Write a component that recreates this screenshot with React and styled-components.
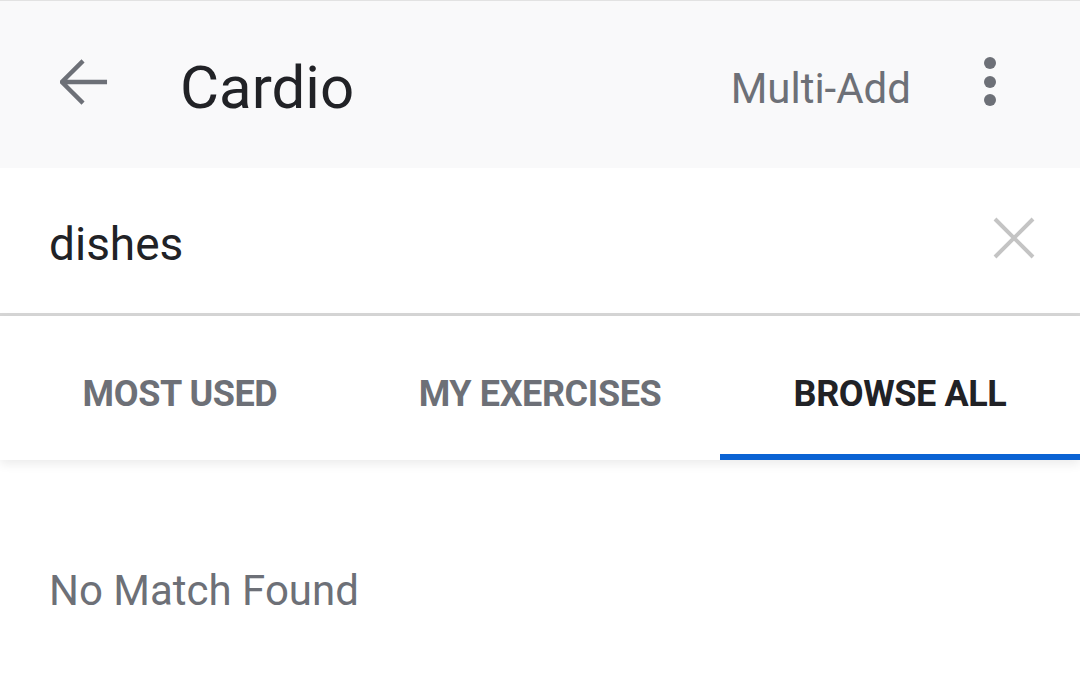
import React from "react";
import styled, { createGlobalStyle } from "styled-components";

const GlobalStyle = createGlobalStyle`
  html, body {
    margin: 0;
    padding: 0;
    background: #ffffff;
    font-family: Roboto, "Noto Sans", sans-serif;
  }
`;

const Page = styled.div`
  width: 1080px;
  height: 682px;
  overflow: hidden;
  background: #ffffff;
`;

const Header = styled.header`
  height: 168px;
  box-sizing: border-box;
  border-top: 1px solid #e2e2e2;
  background: #f9f9fa;
  display: flex;
  align-items: center;
  padding: 0 84px 0 60px;
`;

const BackButton = styled.div`
  width: 48px;
  height: 48px;
  display: flex;
  align-items: center;
  justify-content: center;
  margin-top: -6px;
`;

const Title = styled.h1`
  margin: 6px 0 0 72px;
  flex: 1;
  font-size: 60px;
  font-weight: 400;
  color: #212226;
  letter-spacing: 0;
`;

const Action = styled.span`
  font-size: 42px;
  color: #6d7077;
  margin-right: 73px;
  margin-top: 8px;
`;

const Dots = styled.div`
  display: flex;
  flex-direction: column;
  gap: 6.5px;
  margin-top: -6px;
`;

const Dot = styled.span`
  width: 12px;
  height: 12px;
  border-radius: 50%;
  background: #6d7077;
`;

const SearchRow = styled.div`
  height: 148px;
  box-sizing: border-box;
  border-bottom: 3px solid #d6d6d6;
  display: flex;
  align-items: center;
  padding: 0 45px 0 49px;
`;

const Query = styled.div`
  flex: 1;
  font-size: 46px;
  color: #212226;
  margin-top: 6px;
`;

const ClearButton = styled.div`
  width: 42px;
  height: 42px;
  display: flex;
  align-items: center;
  justify-content: center;
  margin-top: -6px;
`;

const Tabs = styled.nav`
  height: 144px;
  display: grid;
  grid-template-columns: repeat(3, 1fr);
  background: #ffffff;
  box-shadow: 0 4px 10px rgba(0, 0, 0, 0.08);
  position: relative;
`;

const Tab = styled.div`
  display: flex;
  align-items: center;
  justify-content: center;
  font-size: 36px;
  font-weight: 700;
  letter-spacing: -0.4px;
  text-transform: uppercase;
  color: ${(p) => (p.active ? "#212226" : "#6d7077")};
  border-bottom: 6px solid ${(p) => (p.active ? "#0b63d4" : "transparent")};
  padding-top: 18px;
`;

const Empty = styled.p`
  margin: 0;
  padding: 106px 0 0 49px;
  font-size: 42px;
  color: #6d7077;
`;

export default function App() {
  return (
    <Page>
      <GlobalStyle />
      <Header>
        <BackButton>
          <svg width="50" height="48" viewBox="0 0 50 48">
            <path
              d="M2 24 H49 M24 2 L2 24 L24 46"
              fill="none"
              stroke="#6d7077"
              strokeWidth="4.5"
            />
          </svg>
        </BackButton>
        <Title>Cardio</Title>
        <Action>Multi-Add</Action>
        <Dots>
          <Dot />
          <Dot />
          <Dot />
        </Dots>
      </Header>
      <SearchRow>
        <Query>dishes</Query>
        <ClearButton>
          <svg width="42" height="42" viewBox="0 0 42 42">
            <path
              d="M2 2 L40 40 M40 2 L2 40"
              stroke="#c4c4c4"
              strokeWidth="4"
              fill="none"
            />
          </svg>
        </ClearButton>
      </SearchRow>
      <Tabs>
        <Tab>Most Used</Tab>
        <Tab>My Exercises</Tab>
        <Tab active>Browse All</Tab>
      </Tabs>
      <Empty>No Match Found</Empty>
    </Page>
  );
}
